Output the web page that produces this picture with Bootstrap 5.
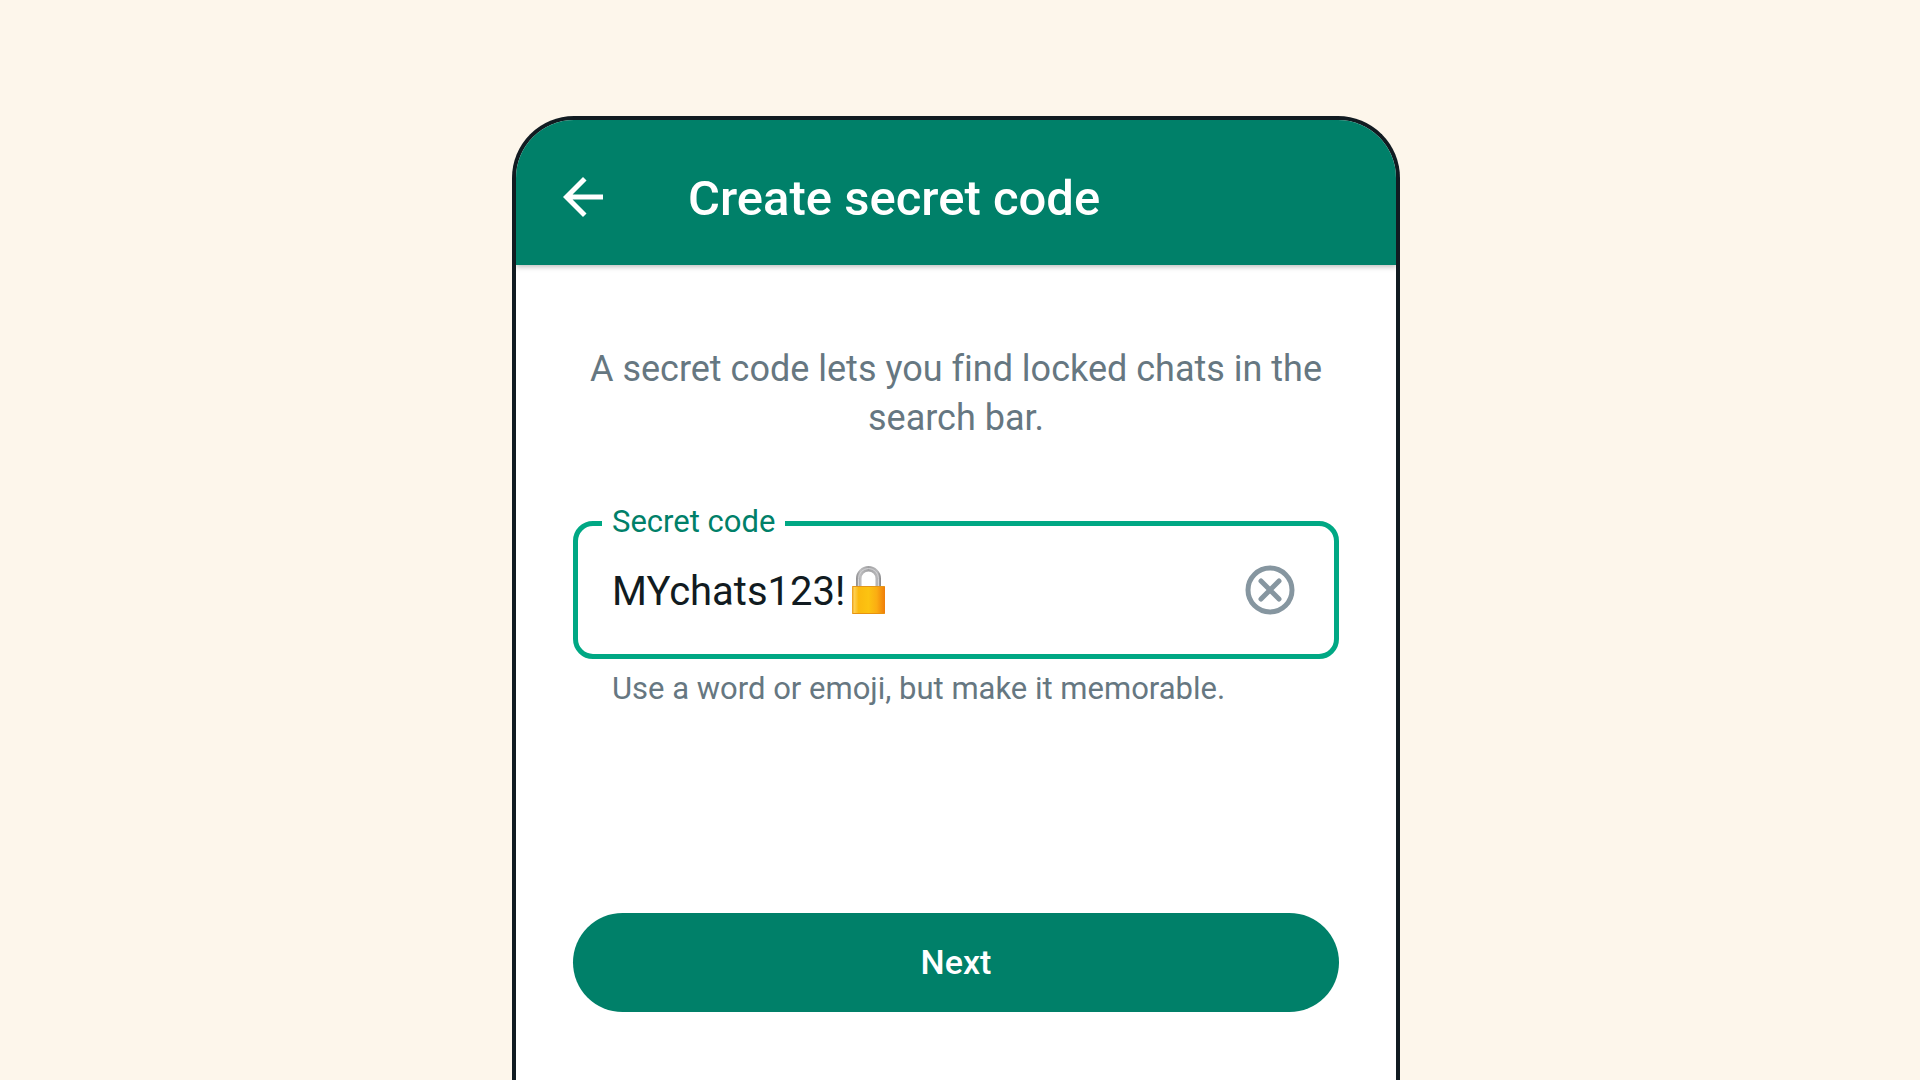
<!DOCTYPE html>
<html lang="en">
<head>
<meta charset="utf-8">
<meta name="viewport" content="width=device-width, initial-scale=1">
<title>Create secret code</title>
<link href="https://cdn.jsdelivr.net/npm/bootstrap@5.3.0/dist/css/bootstrap.min.css" rel="stylesheet">
<style>
  body { background: #fdf6eb; color: #111b21; font-family: Roboto, "Liberation Sans", sans-serif; font-variant-ligatures: none; }
  .stage { padding: 116px 8px 0 0; }
  .phone { width: 100%; max-width: 888px; border: 4px solid #111b21; border-bottom: 0; border-radius: 62px 62px 0 0; }
  .appbar { background: #008069; min-height: 145px; padding: 8px 37px 0; gap: 75px; box-shadow: 0 2px 5px rgba(0, 0, 0, .25); }
  .appbar h1 { font-size: 49px; line-height: 56px; font-weight: 500; padding-top: 4px; }
  .screen-body { padding: 80px 57px 68px; }
  .intro { font-size: 36px; line-height: 49px; color: #667781; margin-bottom: 78px; }
  .code-field { height: 138px; border: 5px solid #00a884; border-radius: 20px; padding: 0 39px 0 34px; }
  .code-label { left: 24px; top: -24px; padding: 0 10px; font-size: 31px; line-height: 40px; color: #008069; }
  .code-input { width: 240px; font-size: 40px; line-height: 48px; color: #111b21; outline: 0; }
  .helper { padding: 0 39px; margin: 10px 0 204px; font-size: 31px; line-height: 40px; color: #667781; }
  .btn-next { --bs-btn-bg: #008069; --bs-btn-color: #fff; --bs-btn-hover-bg: #017561; --bs-btn-hover-color: #fff; height: 99px; font-size: 34px; font-weight: 500; }
</style>
</head>
<body>
<div class="stage min-vh-100 d-flex flex-column align-items-center">
  <main class="phone bg-white flex-grow-1 overflow-hidden">
    <header class="appbar d-flex align-items-center text-white">
      <a href="#" class="text-white d-flex" aria-label="Back">
        <svg width="60" height="60" viewBox="0 0 24 24" fill="currentColor" aria-hidden="true"><path d="M20 11H7.830l5.590-5.590L12 4l-8 8 8 8 1.410-1.410L7.830 13H20v-2z"/></svg>
      </a>
      <h1 class="mb-0">Create secret code</h1>
    </header>
    <form class="screen-body">
      <p class="intro text-center">A secret code lets you find locked chats in the search bar.</p>
      <div class="code-field position-relative d-flex align-items-center">
        <label for="code" class="code-label position-absolute bg-white">Secret code</label>
        <input id="code" type="text" class="code-input border-0 bg-transparent p-0 pt-1" value="MYchats123!" aria-describedby="code-help">
        <svg width="33" height="48" viewBox="0 0 33 48" role="img" aria-label="Lock">
          <defs>
            <linearGradient id="brass"><stop offset="0" stop-color="#e99a1b"/><stop offset=".07" stop-color="#ffd051"/><stop offset=".2" stop-color="#fbb90f"/><stop offset=".5" stop-color="#fcc311"/><stop offset=".75" stop-color="#fbad12"/><stop offset="1" stop-color="#ef7d09"/></linearGradient>
            <linearGradient id="steel"><stop offset="0" stop-color="#8d8d8f"/><stop offset=".18" stop-color="#bdbdbf"/><stop offset=".5" stop-color="#a0a0a2"/><stop offset=".85" stop-color="#b8b8ba"/><stop offset="1" stop-color="#858587"/></linearGradient>
          </defs>
          <path d="M4 22V12.500a12.500 12.500 0 0 1 25 0V22h-5.500V12.500a7 7 0 0 0-14 0V22z" fill="url(#steel)"/>
          <path d="M6.500 20V12.500a10 10 0 0 1 20 0V20" fill="none" stroke="#d4d4d6"/>
          <rect y="20" width="33" height="28" rx="1" fill="url(#brass)"/>
          <path d="M.5 20.500h32" stroke="#e2961a"/>
          <path d="M.5 47.500h32" stroke="#e8930f"/>
        </svg>
        <button type="button" class="btn p-0 border-0 ms-auto d-flex" aria-label="Clear">
          <svg width="50" height="50" viewBox="0 0 50 50" fill="none" stroke="#8696a0" stroke-width="5" aria-hidden="true"><circle cx="25" cy="25" r="22"/><path d="M16 16l18 18M34 16L16 34" stroke-linecap="round"/></svg>
        </button>
      </div>
      <p id="code-help" class="helper">Use a word or emoji, but make it memorable.</p>
      <button type="submit" class="btn btn-next w-100 rounded-pill border-0">Next</button>
    </form>
  </main>
</div>
<script src="https://cdn.jsdelivr.net/npm/bootstrap@5.3.0/dist/js/bootstrap.bundle.min.js"></script>
</body>
</html>
